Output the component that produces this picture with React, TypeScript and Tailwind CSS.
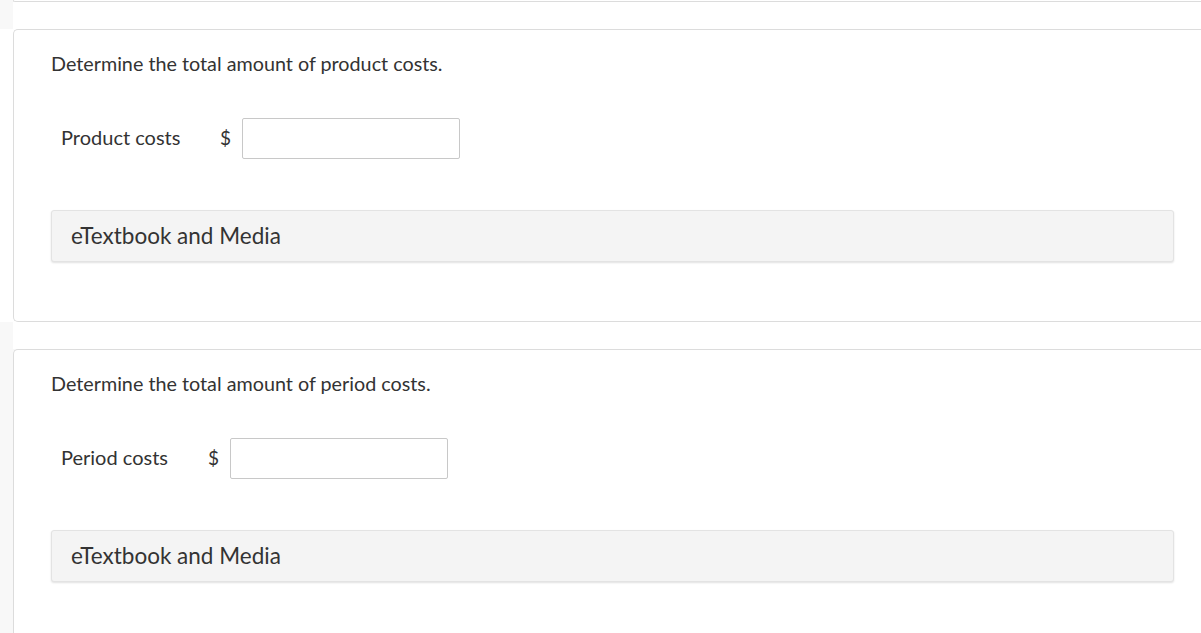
import React from 'react';

type Question = {
  prompt: string;
  label: string;
  labelWidth: string;
};

const QUESTIONS: Question[] = [
  { prompt: 'Determine the total amount of product costs.', label: 'Product costs', labelWidth: 'w-[159px]' },
  { prompt: 'Determine the total amount of period costs.', label: 'Period costs', labelWidth: 'w-[147px]' },
];

function QuestionCard({ q, last }: { q: Question; last?: boolean }) {
  return (
    <div
      className={`ml-[13px] border border-[#dcdcdc] border-r-0 bg-white pl-[37px] pr-[27px] pt-[21px] ${
        last ? 'rounded-tl-[5px] border-b-0 pb-[60px]' : 'rounded-l-[5px] pb-[59px]'
      }`}
    >
      <p className="text-[19.75px] leading-[26px] text-[#333]">{q.prompt}</p>

      <div className="mt-[41px] flex items-center pl-[10px]">
        <span className={`${q.labelWidth} pb-[4px] text-[20px] leading-[24px] text-[#333]`}>{q.label}</span>
        <span className="w-[22px] text-[19px] text-[#333]">$</span>
        <input
          type="text"
          className="h-[41px] w-[218px] rounded-[2px] border border-[#c8c8c8] bg-white px-2 outline-none"
        />
      </div>

      <div className="mt-[51px] flex h-[52px] items-center rounded-[3px] border border-[#e3e3e3] bg-[#f4f4f4] px-[19px] shadow-[0_1px_2px_rgba(0,0,0,0.12)]">
        <span className="text-[22.5px] text-[#333]">eTextbook and Media</span>
      </div>
    </div>
  );
}

export default function App() {
  return (
    <div className="min-h-[633px] w-[1201px] overflow-hidden bg-[#f8f8f8] font-['Lato','Open_Sans',sans-serif]">
      <div className="ml-[13px] h-[2px] rounded-bl-[4px] border-b border-l border-[#dcdcdc] bg-white" />
      <div className="ml-[13px] h-[27px] bg-white" />
      <div className="bg-white">
        <QuestionCard q={QUESTIONS[0]} />
      </div>
      <div className="ml-[13px] h-[27px] bg-white" />
      <QuestionCard q={QUESTIONS[1]} last />
    </div>
  );
}
